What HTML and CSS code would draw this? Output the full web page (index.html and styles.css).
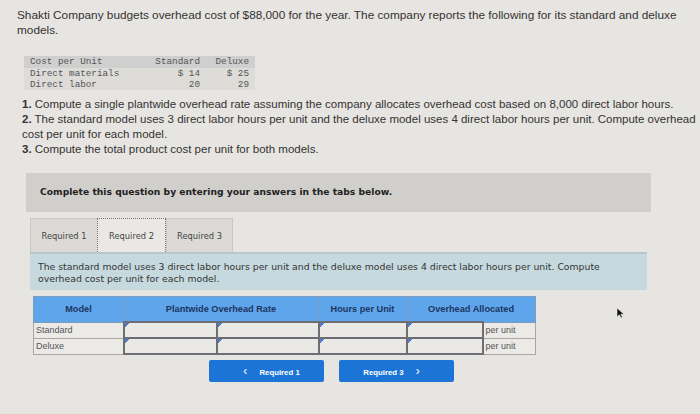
FILE: index.html
```html
<!DOCTYPE html>
<html lang="en">
<head>
    <meta charset="UTF-8">
    <title>Shakti Company - Overhead</title>
    <link rel="stylesheet" href="styles.css">
</head>
<body>

    <p class="intro">Shakti Company budgets overhead cost of $88,000 for the year. The company reports the following for its standard and deluxe models.</p>

    <!-- Cost data -->
    <div class="cost-table">
        <div class="cost-row head"><span>Cost per Unit</span><span class="num">Standard</span><span class="num">Deluxe</span></div>
        <div class="cost-row"><span>Direct materials</span><span class="num">$ 14</span><span class="num">$ 25</span></div>
        <div class="cost-row"><span>Direct labor</span><span class="num">20</span><span class="num">29</span></div>
    </div>

    <div class="steps">
        <p><b>1.</b> Compute a single plantwide overhead rate assuming the company allocates overhead cost based on 8,000 direct labor hours.</p>
        <p><b>2.</b> The standard model uses 3 direct labor hours per unit and the deluxe model uses 4 direct labor hours per unit. Compute overhead<br>cost per unit for each model.</p>
        <p><b>3.</b> Compute the total product cost per unit for both models.</p>
    </div>

    <div class="instructions">Complete this question by entering your answers in the tabs below.</div>

    <div class="tabs">
        <div class="tab">Required 1</div>
        <div class="tab active">Required 2</div>
        <div class="tab">Required 3</div>
    </div>

    <div class="question">The standard model uses 3 direct labor hours per unit and the deluxe model uses 4 direct labor hours per unit. Compute overhead cost per unit for each model.</div>

    <table class="answer">
        <colgroup>
            <col class="c-model">
            <col class="c-rate1">
            <col class="c-rate2">
            <col class="c-hours">
            <col class="c-alloc">
            <col class="c-unit">
        </colgroup>
        <thead>
            <tr>
                <th>Model</th>
                <th colspan="2">Plantwide Overhead Rate</th>
                <th>Hours per Unit</th>
                <th colspan="2">Overhead Allocated</th>
            </tr>
        </thead>
        <tbody>
            <tr>
                <td class="label">Standard</td>
                <td class="input"></td>
                <td class="input"></td>
                <td class="input"></td>
                <td class="input"></td>
                <td class="label">per unit</td>
            </tr>
            <tr>
                <td class="label">Deluxe</td>
                <td class="input"></td>
                <td class="input"></td>
                <td class="input"></td>
                <td class="input"></td>
                <td class="label">per unit</td>
            </tr>
        </tbody>
    </table>

    <div class="nav">
        <button class="nav-btn"><span class="chev">&lsaquo;</span> Required 1</button>
        <button class="nav-btn">Required 3 <span class="chev">&rsaquo;</span></button>
    </div>

    <svg class="cursor" width="9" height="12" viewBox="0 0 9 12">
        <path d="M1 1 L1 10 L3.4 7.8 L5 11 L6.4 10.3 L4.9 7.2 L8 7.2 Z" fill="#111" stroke="#eee" stroke-width="0.6"/>
    </svg>

</body>
</html>
```

FILE: styles.css
```css
/* Page */
body {
    margin: 0;
    padding: 8px 0 0 0;
    background-color: #e7e5e1;
    font-family: "Liberation Sans", Arial, sans-serif;
    color: #333;
    position: relative;
    height: 406px;
    overflow: hidden;
}

.intro {
    margin: 0 0 0 17px;
    width: 683px;
    font-size: 11.8px;
    line-height: 15px;
}

/* Cost data */
.cost-table {
    margin: 18px 0 0 24px;
    width: 231px;
    background: #dddcd9;
    font-family: "Liberation Mono", "Courier New", monospace;
    font-size: 9.3px;
    color: #555;
}

.cost-row {
    display: grid;
    grid-template-columns: 124px 46px 49px;
    height: 11px;
    line-height: 11px;
    padding-left: 6px;
}

.cost-row.head {
    background: #cfcfcf;
    height: 12px;
    line-height: 12px;
}

.cost-row .num {
    text-align: right;
}

/* Steps */
.steps {
    margin: 7px 0 0 22px;
    font-size: 11.5px;
    line-height: 15px;
    color: #333;
}

.steps p {
    margin: 0;
}

/* Instructions bar */
.instructions {
    margin: 16px 0 0 26px;
    width: 611px;
    height: 39px;
    line-height: 38px;
    padding-left: 14px;
    background: #d0cfcc;
    font-family: "DejaVu Sans", Verdana, sans-serif;
    font-weight: bold;
    font-size: 9.2px;
    color: #222;
}

/* Tabs */
.tabs {
    display: flex;
    margin: 6px 0 0 30px;
    height: 34px;
}

.tab {
    width: 66px;
    text-align: center;
    line-height: 34px;
    background: #dcdad6;
    border: 1px solid #cac8c4;
    border-right: none;
    border-bottom: none;
    font-family: "DejaVu Sans", Verdana, sans-serif;
    font-size: 8.3px;
    color: #444;
}

.tab:last-child {
    width: 65px;
    border-right: 1px solid #cac8c4;
}

.tab.active {
    background: #e9e8e5;
    border: 1px dotted #777;
    border-bottom: none;
    width: 67px;
}

/* Question text */
.question {
    margin: 0 0 0 30px;
    width: 603px;
    padding: 7px 6px 5px 8px;
    background: #c6d9de;
    border-top: 2px solid #b7c7cb;
    font-family: "DejaVu Sans", Verdana, sans-serif;
    font-size: 9.3px;
    line-height: 12px;
    color: #333;
}

/* Answer table */
.answer {
    margin: 6px 0 0 33px;
    border-collapse: collapse;
    font-size: 9px;
    table-layout: fixed;
    width: 502px;
}

.answer th {
    background: #5fa5ec;
    color: #1c3560;
    height: 24px;
    font-size: 9.2px;
    font-weight: bold;
    border: 1px solid #7c9cbd;
    padding: 0;
}

.answer td {
    height: 14px;
    padding: 0 2px;
    border: 1px solid #a9a7a3;
    background: #ebeae7;
    color: #555;
}

.answer td.input {
    border: 2px solid #6c6e74;
    background-color: #eae9e6;
    background-image: linear-gradient(135deg, #4d7fc9 0, #4d7fc9 3px, transparent 3px);
    background-size: 6px 6px;
    background-repeat: no-repeat;
}

.c-model { width: 90px; }
.c-rate1 { width: 93px; }
.c-rate2 { width: 102px; }
.c-hours { width: 88px; }
.c-alloc { width: 76px; }
.c-unit { width: 53px; }

/* Navigation buttons */
.nav {
    display: flex;
    gap: 15px;
    margin: 5px 0 0 209px;
}

.nav-btn {
    width: 115px;
    height: 22px;
    background: #1c74d6;
    color: white;
    border: none;
    border-radius: 2px;
    font-family: "Liberation Sans", Arial, sans-serif;
    font-size: 7.8px;
    font-weight: bold;
    padding: 0;
}

.chev {
    font-size: 12px;
    font-weight: normal;
    margin: 0 10px;
}

.cursor {
    position: absolute;
    left: 616px;
    top: 307px;
}
```
